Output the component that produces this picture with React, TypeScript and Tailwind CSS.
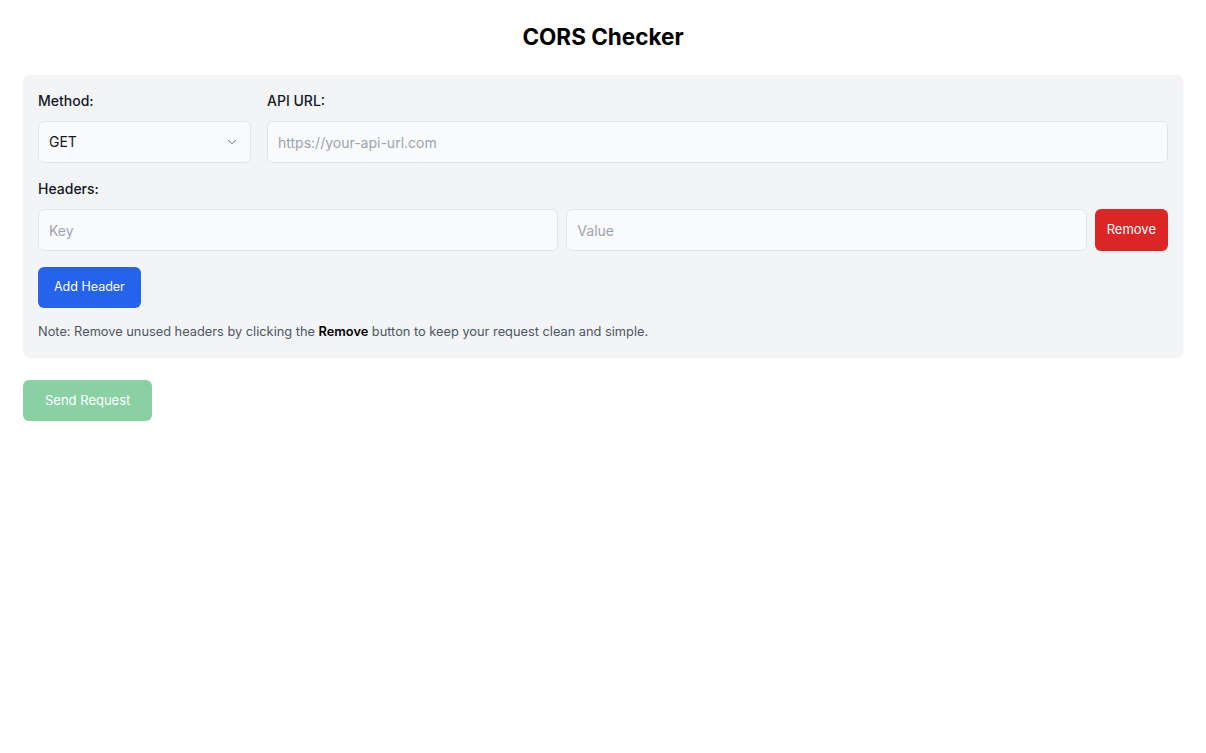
import { ChevronDown } from 'lucide-react';

const App = () => {
  return (
    <div className="min-h-screen bg-white px-[23px] pt-[21px] font-['Inter',sans-serif] text-gray-900">
      <h1 className="mb-[22px] text-center text-[22.5px] leading-8 font-bold text-black">CORS Checker</h1>

      <div className="rounded-lg bg-[#f3f4f6] px-[15px] pt-4 pb-[18px] shadow-[0_0_2px_rgba(0,0,0,0.06)]">
        <div className="flex gap-4">
          <div className="w-[213px] shrink-0">
            <label className="mb-2.5 block text-sm font-medium text-[#111827]">Method:</label>
            <div className="relative">
              <select className="h-[42px] w-full appearance-none rounded-md border border-[#e2e4e8] bg-[#f9fafb] px-2.5 text-sm text-[#111827] outline-none">
                <option>GET</option>
                <option>POST</option>
                <option>PUT</option>
                <option>DELETE</option>
              </select>
              <ChevronDown
                size={14}
                strokeWidth={1.5}
                className="pointer-events-none absolute top-1/2 right-[12px] -translate-y-1/2 text-[#4b5563]"
              />
            </div>
          </div>
          <div className="flex-1">
            <label className="mb-2.5 block text-sm font-medium text-[#111827]">API URL:</label>
            <input
              type="text"
              placeholder="https://your-api-url.com"
              className="h-[42px] w-full rounded-md border border-[#e2e4e8] bg-[#f9fafb] px-2.5 text-sm outline-none placeholder:text-[#9ca3af]"
            />
          </div>
        </div>

        <div className="mt-4">
          <label className="mb-2.5 block text-sm font-medium text-[#111827]">Headers:</label>
          <div className="flex gap-2">
            <input
              type="text"
              placeholder="Key"
              className="h-[42px] min-w-0 flex-1 rounded-md border border-[#e2e4e8] bg-[#f9fafb] px-2.5 text-sm outline-none placeholder:text-[#9ca3af]"
            />
            <input
              type="text"
              placeholder="Value"
              className="h-[42px] min-w-0 flex-1 rounded-md border border-[#e2e4e8] bg-[#f9fafb] px-2.5 text-sm outline-none placeholder:text-[#9ca3af]"
            />
            <button className="h-[42px] rounded-md bg-[#dc2626] px-3 text-[13px] text-white">Remove</button>
          </div>
          <button className="mt-4 h-[41px] rounded-md bg-[#2563eb] px-4 text-[12.5px] text-white">Add Header</button>
          <p className="mt-4 text-[12.8px] leading-4 text-[#4b5563]">
            Note: Remove unused headers by clicking the <strong className="font-semibold text-black">Remove</strong> button to keep your request clean and simple.
          </p>
        </div>
      </div>

      <button disabled className="mt-[22px] h-[41px] rounded-md bg-[#16a34a] px-[22px] text-[13px] text-white opacity-50">
        Send Request
      </button>
    </div>
  );
};

export default App;
